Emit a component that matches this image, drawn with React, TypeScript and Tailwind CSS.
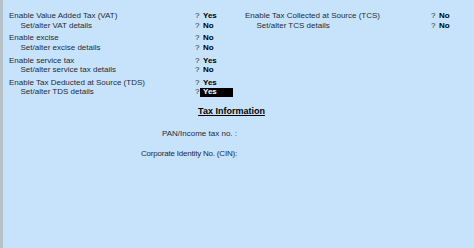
import React from "react";

type Row = { label: string; value: string; sub?: boolean; selected?: boolean };

const leftGroups: Row[][] = [
  [
    { label: "Enable Value Added Tax (VAT)", value: "Yes" },
    { label: "Set/alter VAT details", value: "No", sub: true },
  ],
  [
    { label: "Enable excise", value: "No" },
    { label: "Set/alter excise details", value: "No", sub: true },
  ],
  [
    { label: "Enable service tax", value: "Yes" },
    { label: "Set/alter service tax details", value: "No", sub: true },
  ],
  [
    { label: "Enable Tax Deducted at Source (TDS)", value: "Yes" },
    { label: "Set/alter TDS details", value: "Yes", sub: true, selected: true },
  ],
];

const rightGroups: Row[][] = [
  [
    { label: "Enable Tax Collected at Source (TCS)", value: "No" },
    { label: "Set/alter TCS details", value: "No", sub: true },
  ],
];

function FeatureRow({ row }: { row: Row }) {
  return (
    <div className="flex h-[9.5px] items-center leading-[9.5px]">
      <div className={`w-[186px] shrink-0 text-[#1f2b38] ${row.sub ? "pl-[11.5px]" : ""}`}>{row.label}</div>
      <div className="w-[5px] shrink-0 text-[#1f2b38]">?</div>
      {row.selected ? (
        <div className="flex h-[9px] w-[33px] items-center bg-black pl-[3px] font-bold text-white">{row.value}</div>
      ) : (
        <div className="pl-[3px] font-bold text-black">{row.value}</div>
      )}
    </div>
  );
}

function Column({ groups, className }: { groups: Row[][]; className?: string }) {
  return (
    <div className={`flex flex-col gap-[3.3px] ${className ?? ""}`}>
      {groups.map((g, i) => (
        <div key={i} className="flex flex-col">
          {g.map((r) => (
            <FeatureRow key={r.label} row={r} />
          ))}
        </div>
      ))}
    </div>
  );
}

export default function App() {
  return (
    <div
      className="flex h-[248px] w-[474px] overflow-hidden border-l-[3px] border-[#b7c1c9] bg-[#c7e3fc] text-[8px]"
      style={{ fontFamily: '"Liberation Sans", Arial, sans-serif' }}
    >
      <div className="flex flex-1 flex-col pt-[11px]">
        {/* Feature toggles: two columns */}
        <div className="flex pl-[6px]">
          <Column groups={leftGroups} className="w-[236px] shrink-0" />
          <Column groups={rightGroups} />
        </div>

        {/* Tax information */}
        <div className="mt-[9px] w-[457px] text-center text-[9px] font-bold leading-[10px] text-black">
          <span className="underline underline-offset-[1px]">Tax Information</span>
        </div>
        <div className="mt-[13px] flex w-[234px] flex-col gap-[10px] text-right leading-[10px] text-[#1f2b38]">
          <div>PAN/Income tax no. :</div>
          <div className="tracking-[-0.2px]">Corporate Identity No. (CIN):</div>
        </div>
      </div>
    </div>
  );
}
